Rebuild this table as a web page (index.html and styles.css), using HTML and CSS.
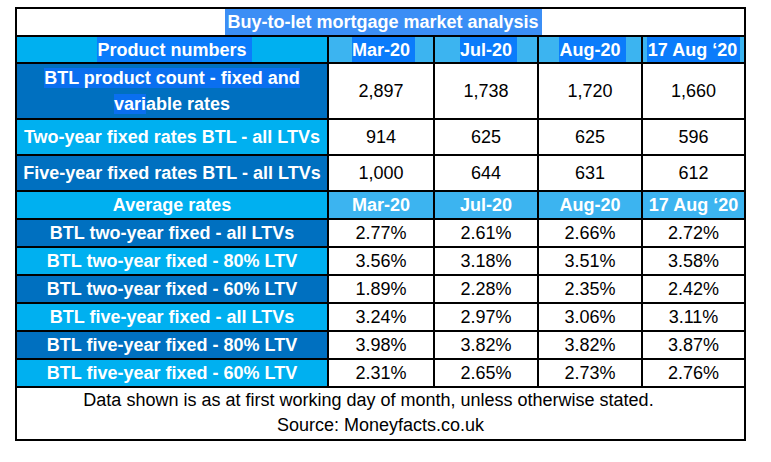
FILE: index.html
```html
<!DOCTYPE html>
<html lang="en">
<head>
<meta charset="utf-8">
<title>Buy-to-let mortgage market analysis</title>
<link rel="stylesheet" href="styles.css">
</head>
<body>
<div class="sheet">
  <div class="cell title span"><span class="hl-title">Buy-to-let mortgage market analysis</span></div>

  <div class="cell lbl light"><span class="hl trail">Product numbers</span></div>
  <div class="cell hd"><span class="hl trail">Mar-20</span></div>
  <div class="cell hd"><span class="hl trail">Jul-20</span></div>
  <div class="cell hd"><span class="hl trail">Aug-20</span></div>
  <div class="cell hd"><span class="hl last">17 Aug ‘20</span></div>

  <div class="cell lbl dark two"><span class="hl2">BTL product count - fixed and</span><br><span class="hl2">vari</span>able rates</div>
  <div class="cell val">2,897</div>
  <div class="cell val">1,738</div>
  <div class="cell val">1,720</div>
  <div class="cell val">1,660</div>

  <div class="cell lbl light">Two-year fixed rates BTL - all LTVs</div>
  <div class="cell val">914</div>
  <div class="cell val">625</div>
  <div class="cell val">625</div>
  <div class="cell val">596</div>

  <div class="cell lbl dark">Five-year fixed rates BTL - all LTVs</div>
  <div class="cell val">1,000</div>
  <div class="cell val">644</div>
  <div class="cell val">631</div>
  <div class="cell val">612</div>

  <div class="cell lbl light">Average rates</div>
  <div class="cell hd">Mar-20</div>
  <div class="cell hd">Jul-20</div>
  <div class="cell hd">Aug-20</div>
  <div class="cell hd">17 Aug ‘20</div>

  <div class="cell lbl dark">BTL two-year fixed - all LTVs</div>
  <div class="cell val">2.77%</div>
  <div class="cell val">2.61%</div>
  <div class="cell val">2.66%</div>
  <div class="cell val">2.72%</div>

  <div class="cell lbl light">BTL two-year fixed - 80% LTV</div>
  <div class="cell val">3.56%</div>
  <div class="cell val">3.18%</div>
  <div class="cell val">3.51%</div>
  <div class="cell val">3.58%</div>

  <div class="cell lbl dark">BTL two-year fixed - 60% LTV</div>
  <div class="cell val">1.89%</div>
  <div class="cell val">2.28%</div>
  <div class="cell val">2.35%</div>
  <div class="cell val">2.42%</div>

  <div class="cell lbl light">BTL five-year fixed - all LTVs</div>
  <div class="cell val">3.24%</div>
  <div class="cell val">2.97%</div>
  <div class="cell val">3.06%</div>
  <div class="cell val">3.11%</div>

  <div class="cell lbl dark">BTL five-year fixed - 80% LTV</div>
  <div class="cell val">3.98%</div>
  <div class="cell val">3.82%</div>
  <div class="cell val">3.82%</div>
  <div class="cell val">3.87%</div>

  <div class="cell lbl light">BTL five-year fixed - 60% LTV</div>
  <div class="cell val">2.31%</div>
  <div class="cell val">2.65%</div>
  <div class="cell val">2.73%</div>
  <div class="cell val">2.76%</div>

  <div class="cell foot span"><span class="note">Data shown is as at first working day of month, unless otherwise stated.</span><br>Source: Moneyfacts.co.uk</div>
</div>
</body>
</html>
```

FILE: styles.css
```css
* { box-sizing: border-box; }

html, body {
  margin: 0;
  padding: 0;
  background: #ffffff;
}

body {
  font-family: "Liberation Sans", Arial, sans-serif;
  font-size: 18px;
  color: #000;
}

.sheet {
  margin: 7px 0 0 15px;
  width: 731px;
  display: grid;
  grid-template-columns: 310px 104px 102px 102px 101px;
  grid-template-rows: 26px 25px 54px 34px 34px 26px 26px 26px 26px 26px 26px 26px 51px;
  gap: 2px;
  padding: 2px;
  background: #000;
}

.cell {
  display: flex;
  align-items: center;
  justify-content: center;
  text-align: center;
  line-height: 26px;
  white-space: nowrap;
  overflow: hidden;
}

.span { grid-column: 1 / -1; }

.title {
  background: #fff;
  font-weight: bold;
  color: #fff;
}

.hl-title {
  background: #3b8ef5;
  padding: 0 3px 0 2px;
  margin-left: 6px;
}

.lbl {
  color: #fff;
  font-weight: bold;
}

.light { background: #00b0f0; }
.dark  { background: #0070c0; }

.two {
  display: block;
  padding-top: 1px;
}

.hl { background: #0b7cfb; }
.hl2 { background: #0a6ff0; }

.trail {
  padding-right: 5px;
  margin-right: -5px;
}

.last {
  padding: 0 3px 0 1px;
}

.hd {
  background: #3cb4f0;
  color: #fff;
  font-weight: bold;
}

.val {
  background: #fff;
  font-weight: normal;
}

.foot {
  background: #fff;
  display: block;
  line-height: 25px;
}

.note {
  padding-right: 24px;
}
```
